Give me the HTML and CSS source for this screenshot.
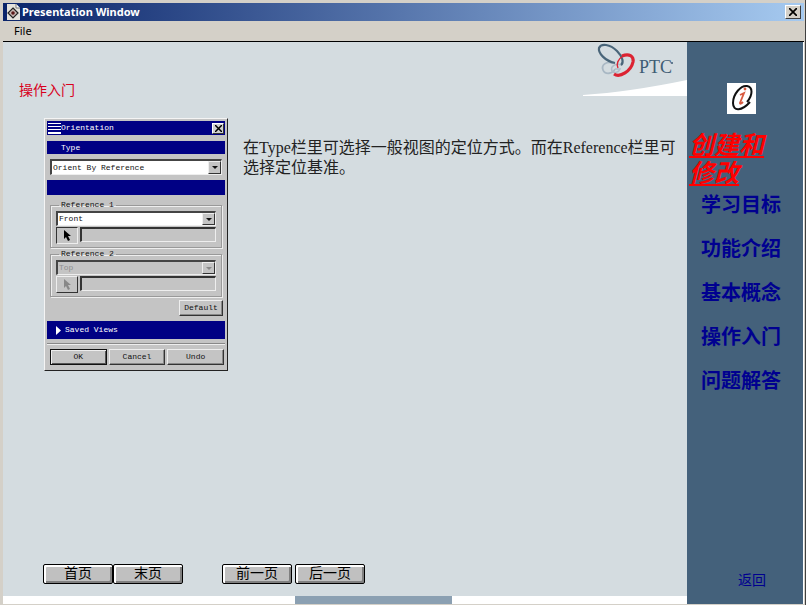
FILE: index.html
```
<!DOCTYPE html>
<html lang="zh-CN">
<head>
    <meta charset="UTF-8">
    <title>Presentation Window</title>
    <link rel="stylesheet" href="styles.css">
</head>
<body>
    <div class="window">
        <header class="title-bar">
            <svg class="title-icon" width="13" height="16" viewBox="0 0 13 16">
                <path d="M0 0h9l4 4v12H0z" fill="#e4e2dc"/>
                <path d="M9 0v4h4" fill="#fff" stroke="#777" stroke-width="1"/>
                <path d="M6 4l5 5-5 5-5-5z" fill="#c8b8b4" stroke="#222" stroke-width="1.2"/>
                <circle cx="6" cy="9" r="1.8" fill="#5a1818"/>
            </svg>
            <h1>Presentation Window</h1>
            <button class="close-btn" aria-label="Close">
                <svg width="8" height="8" viewBox="0 0 8 8"><path d="M0 0l8 8M8 0L0 8" stroke="#000" stroke-width="1.7"/></svg>
            </button>
        </header>
        <nav class="menu-bar"><button class="menu-item">File</button></nav>

        <div class="content">
            <main class="page">
                <div class="page-head">
                    <h2>操作入门</h2>
                    <svg class="logo" width="104" height="54" viewBox="0 0 104 54" role="img" aria-label="PTC">
                        <path d="M0 53Q46 50 104 38V54H0z" fill="#fff"/>
                        <g fill="none">
                            <path d="M30 21C23 19 18 23 20 28C22 33 30 32 32 27" stroke="#a9b8c4" stroke-width="1.8"/>
                            <path d="M38 23C33 21 27 24 29 29C31 32 36 30 37 27H32" stroke="#b0bdc8" stroke-width="1.6"/>
                            <path d="M32 21C22 19 15 11 16 6C18 1 27 2 34 9C40 15 41 21 38 23" stroke="#496579" stroke-width="2.2"/>
                            <path d="M39 14C46 11 51 14 50 20C48 29 37 36 31 32" stroke="#dc2332" stroke-width="3.2"/>
                            <path d="M40 14C35 17 33 22 35 26" stroke="#dc2332" stroke-width="1.4"/>
                        </g>
                        <text class="logo-text" x="56" y="31">PTC</text>
                        <circle cx="89" cy="21" r="1" fill="#3f5d74"/>
                    </svg>
                </div>

                <div class="lesson">
                    <div class="dialog">
                        <div class="dialog-title">
                            <svg width="13" height="12" viewBox="0 0 13 12"><path d="M0 1h13v1H0zM0 4h13v1H0zM0 7h13v1H0zM0 10h13v2H0z" fill="#fff"/></svg>
                            <span>Orientation</span>
                            <button class="dialog-close" aria-label="Close">
                                <svg width="7" height="7" viewBox="0 0 7 7"><path d="M0 0l7 7M7 0L0 7" stroke="#000" stroke-width="1.5"/></svg>
                            </button>
                        </div>
                        <div class="band band-type"><label for="orientType">Type</label></div>
                        <div class="combo combo-type">
                            <select id="orientType"><option>Orient By Reference</option></select>
                            <span class="arrow"></span>
                        </div>
                        <div class="band band-empty"></div>
                        <fieldset>
                            <legend>Reference 1</legend>
                            <div class="combo">
                                <select aria-label="Reference 1"><option>Front</option></select>
                                <span class="arrow"></span>
                            </div>
                            <div class="pick-row">
                                <button class="pick pressed" aria-label="Select reference 1">
                                    <svg width="8" height="11" viewBox="0 0 8 11"><path d="M1 0v9l2-2 2 4 2-1-2-4h3z" fill="#000"/></svg>
                                </button>
                                <input type="text" aria-label="Reference 1 item">
                            </div>
                        </fieldset>
                        <fieldset>
                            <legend>Reference 2</legend>
                            <div class="combo disabled">
                                <select aria-label="Reference 2" disabled><option>Top</option></select>
                                <span class="arrow"></span>
                            </div>
                            <div class="pick-row">
                                <button class="pick" aria-label="Select reference 2" disabled>
                                    <svg width="8" height="11" viewBox="0 0 8 11"><path d="M1 0v9l2-2 2 4 2-1-2-4h3z" fill="#888"/></svg>
                                </button>
                                <input type="text" aria-label="Reference 2 item" disabled>
                            </div>
                        </fieldset>
                        <button class="dialog-btn default-btn">Default</button>
                        <div class="band band-views">
                            <svg width="5" height="9" viewBox="0 0 5 9"><path d="M0 0l5 4.500L0 9z" fill="#fff"/></svg>
                            <span>Saved Views</span>
                        </div>
                        <div class="dialog-actions">
                            <button class="dialog-btn primary">OK</button>
                            <button class="dialog-btn">Cancel</button>
                            <button class="dialog-btn">Undo</button>
                        </div>
                    </div>
                    <p>在Type栏里可选择一般视图的定位方式。而在Reference栏里可选择定位基准。</p>
                </div>

                <div class="pager">
                    <div class="pager-group">
                        <button>首页</button>
                        <button>末页</button>
                    </div>
                    <div class="pager-group spaced">
                        <button>前一页</button>
                        <button>后一页</button>
                    </div>
                </div>
                <div class="strip"><div class="strip-mark"></div></div>
            </main>

            <aside class="sidebar">
                <svg class="info-icon" width="29" height="31" viewBox="0 0 29 31" role="img" aria-label="i">
                    <rect width="29" height="31" fill="#fff"/>
                    <path d="M20 19C26 12 26 4 20 3C14 2 6 11 6 20C6 29 15 28 23 19" fill="none" stroke="#111" stroke-width="2"/>
                    <path d="M13 12l4-2-4 10q0 2 3-1" fill="none" stroke="#d85a40" stroke-width="1.8"/>
                    <circle cx="18" cy="6" r="1.4" fill="#d85a40"/>
                </svg>
                <a class="chapter" href="#">创建和修改</a>
                <nav class="topics">
                    <a href="#">学习目标</a>
                    <a href="#">功能介绍</a>
                    <a href="#">基本概念</a>
                    <a href="#">操作入门</a>
                    <a href="#">问题解答</a>
                </nav>
                <a class="back" href="#">返回</a>
            </aside>
        </div>
    </div>
</body>
</html>
```

FILE: styles.css
```
* { box-sizing: border-box; }
body { margin: 0; font-family: "Liberation Serif", "Noto Sans CJK SC", serif; font-size: 16px; color: #222; }
button, select, input { font: inherit; color: inherit; margin: 0; padding: 0; border-radius: 0; }
a { text-decoration: none; }
svg { display: block; flex: none; }

.window { min-height: 100vh; display: flex; flex-direction: column; background: #d4d0c8; padding: 3px 1px 1px 3px; border-right: 1px solid #404040; }
.title-bar { display: flex; align-items: center; height: 18px; padding: 0 3px 0 4px; background: linear-gradient(to right, #0a246a, #a6caf0); color: #fff; }
.title-bar h1 { margin: 0 auto 0 2px; font: bold 11px/18px "Noto Sans", sans-serif; }
.close-btn { width: 16px; height: 14px; display: flex; align-items: center; justify-content: center; background: #d4d0c8; border: 1px solid; border-color: #fff #404040 #404040 #fff; }
.menu-bar { height: 21px; padding: 0 11px; border-bottom: 1px solid #000; }
.menu-item { height: 20px; background: none; border: none; color: #000; font: 11px/20px "Noto Sans", sans-serif; }

.content { flex: 1; display: grid; grid-template-columns: 1fr 116px; border-right: 1px solid #fff; }
.page { display: flex; flex-direction: column; background: #d4dce0; }
.page-head { display: flex; justify-content: space-between; align-items: flex-start; height: 76px; }
.page-head h2 { margin: 39px 0 0 16px; font-size: 14px; line-height: 20px; font-weight: normal; color: #d8001c; }
.logo-text { font-family: "Liberation Serif", serif; font-size: 18px; fill: #3f5d74; }

.lesson { display: flex; align-items: flex-start; gap: 15px; padding-left: 41px; }
.lesson p { flex: 1; margin: 20px 0 0; line-height: 20px; }

.dialog { width: 184px; flex: none; padding: 2px; background: #c4c4c4; border: 1px solid; border-color: #f4f4f4 #222 #222 #f4f4f4; color: #111; font: 8px/10px "Liberation Mono", monospace; }
.dialog-title { display: flex; align-items: center; height: 14px; padding: 0 1px; background: #000084; color: #fff; }
.dialog-title span { flex: 1; }
.dialog-close { width: 12px; height: 11px; display: flex; align-items: center; justify-content: center; background: #d0d0d0; border: 1px solid; border-color: #fff #333 #333 #fff; }
.band { display: flex; align-items: center; background: #000084; color: #fff; }
.band-type { height: 13px; margin-top: 6px; padding-left: 14px; }
.band-empty { height: 15px; }
.band-views { height: 18px; margin-top: 5px; padding-left: 9px; gap: 4px; }

.combo { display: flex; height: 15px; background: #fff; border: 1px solid; border-width: 2px 1px 1px 2px; border-color: #444 #eee #eee #444; }
.combo select { flex: 1; min-width: 0; appearance: none; border: none; background: none; padding-left: 1px; }
.combo .arrow { width: 13px; display: flex; align-items: center; justify-content: center; background: #c4c4c4; border: 1px solid; border-color: #eee #333 #333 #eee; }
.arrow::before { content: ""; border: 3px solid transparent; border-top-color: #111; border-bottom: 0; }
.combo-type { height: 16px; margin: 5px 3px; }
.combo.disabled { background: #c4c4c4; }
.combo.disabled select { color: #909090; opacity: 1; }
.disabled .arrow::before { border-top-color: #888; }

fieldset { margin: 5px 3px 0; padding: 1px 5px 3px; border: 1px solid #999; box-shadow: 1px 1px 0 #eee, inset 1px 1px 0 #eee; }
fieldset + fieldset { margin-top: 1px; }
legend { margin-left: 3px; padding: 0 2px; }
.pick-row { display: flex; gap: 2px; margin-top: 1px; }
.pick { width: 22px; height: 17px; display: flex; align-items: center; justify-content: center; background: #c4c4c4; border: 1px solid; border-color: #eee #333 #333 #eee; }
.pick.pressed { border-color: #333 #eee #eee #333; }
.pick-row input { flex: 1; min-width: 0; height: 15px; background: #c4c4c4; border: 1px solid; border-width: 2px 1px 1px 2px; border-color: #333 #eee #eee #333; }

.dialog-btn { height: 16px; background: #c4c4c4; border: 1px solid; border-color: #eee #333 #333 #eee; box-shadow: inset -1px -1px 0 #888; text-align: center; }
.default-btn { display: block; width: 44px; margin: 3px 2px 0 auto; }
.dialog-actions { display: grid; grid-template-columns: repeat(3, 1fr); gap: 2px; margin-top: 4px; padding: 5px 1px 3px 3px; border-top: 1px solid #888; box-shadow: inset 0 1px 0 #eee; }
.dialog-btn.primary { border-color: #111; box-shadow: inset 1px 1px 0 #eee, inset -1px -1px 0 #555; }

.pager { display: flex; margin-top: auto; padding: 0 0 12px 40px; }
.pager-group { display: flex; }
.pager-group.spaced { margin-left: 39px; gap: 3px; }
.pager button { width: 70px; height: 20px; background: #c0c0c0; border: 1px solid #000; border-radius: 2px; box-shadow: inset 2px 2px 0 #fff, inset -2px -2px 0 #808080; color: #000; font-size: 14px; line-height: 18px; }
.strip { height: 8px; background: #fff; display: flex; justify-content: center; padding-left: 57px; }
.strip-mark { width: 25%; max-width: 157px; background: #8ba0b2; }

.sidebar { display: flex; flex-direction: column; background: #44617b; }
.info-icon { margin: 41px 0 0 40px; }
.chapter { margin: 18px 0 0 2px; width: 76px; font-size: 25px; line-height: 28px; font-weight: bold; font-style: italic; color: #f00; text-decoration: underline; }
.topics { display: flex; flex-direction: column; gap: 20px; margin: 5px 0 0 14px; }
.topics a { font-size: 20px; line-height: 24px; font-weight: bold; color: #000090; }
.back { margin: auto 0 13px 51px; font-size: 14px; line-height: 20px; color: #000090; }
```
